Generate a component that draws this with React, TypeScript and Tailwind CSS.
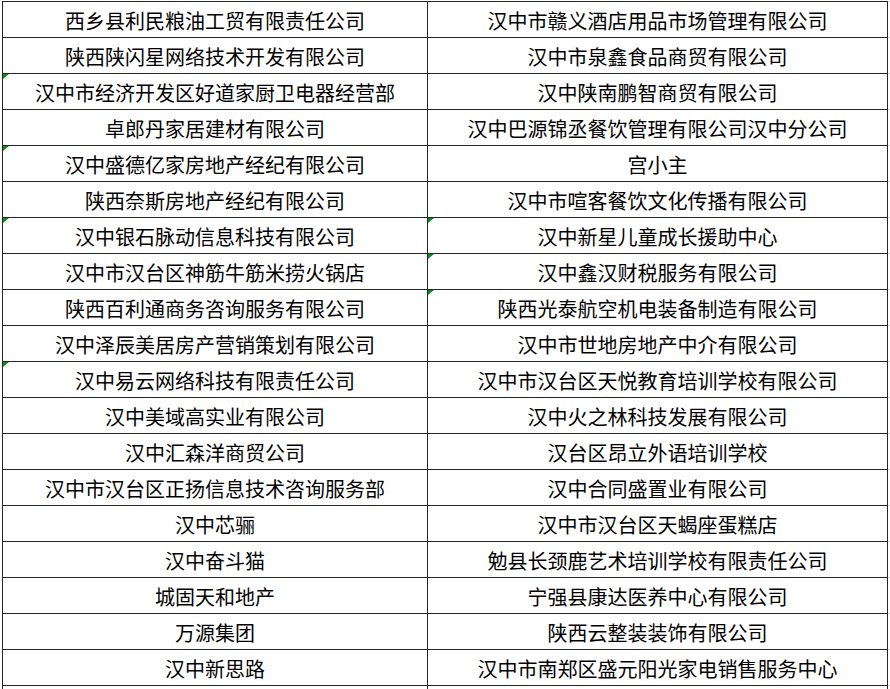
const ROWS: [string, string][] = [
  ["西乡县利民粮油工贸有限责任公司", "汉中市赣义酒店用品市场管理有限公司"],
  ["陕西陕闪星网络技术开发有限公司", "汉中市泉鑫食品商贸有限公司"],
  ["汉中市经济开发区好道家厨卫电器经营部", "汉中陕南鹏智商贸有限公司"],
  ["卓郎丹家居建材有限公司", "汉中巴源锦丞餐饮管理有限公司汉中分公司"],
  ["汉中盛德亿家房地产经纪有限公司", "宫小主"],
  ["陕西奈斯房地产经纪有限公司", "汉中市喧客餐饮文化传播有限公司"],
  ["汉中银石脉动信息科技有限公司", "汉中新星儿童成长援助中心"],
  ["汉中市汉台区神筋牛筋米捞火锅店", "汉中鑫汉财税服务有限公司"],
  ["陕西百利通商务咨询服务有限公司", "陕西光泰航空机电装备制造有限公司"],
  ["汉中泽辰美居房产营销策划有限公司", "汉中市世地房地产中介有限公司"],
  ["汉中易云网络科技有限责任公司", "汉中市汉台区天悦教育培训学校有限公司"],
  ["汉中美域高实业有限公司", "汉中火之林科技发展有限公司"],
  ["汉中汇森洋商贸公司", "汉台区昂立外语培训学校"],
  ["汉中市汉台区正扬信息技术咨询服务部", "汉中合同盛置业有限公司"],
  ["汉中芯骊", "汉中市汉台区天蝎座蛋糕店"],
  ["汉中奋斗猫", "勉县长颈鹿艺术培训学校有限责任公司"],
  ["城固天和地产", "宁强县康达医养中心有限公司"],
  ["万源集团", "陕西云整装装饰有限公司"],
  ["汉中新思路", "汉中市南郑区盛元阳光家电销售服务中心"],
  ["", ""],
];

// rows (0-based) whose cell shows the green "number stored as text" marker
const MARK_LEFT = [2, 4, 6, 10];
const MARK_RIGHT = [6, 7, 8];

function Marker() {
  return (
    <svg className="absolute left-0 top-0" width="6" height="5" viewBox="0 0 6 5">
      <polygon points="0,0 6,0 0,5" fill="#108a1c" />
    </svg>
  );
}

function Cell({ text, width, mark }: { text: string; width: string; mark: boolean }) {
  return (
    <div className={`relative flex items-center justify-center border-r border-[#262626] ${width}`}>
      {mark && <Marker />}
      <span className="pt-[2px] whitespace-nowrap">{text}</span>
    </div>
  );
}

export default function App() {
  return (
    <div
      className="h-[689px] w-[890px] overflow-hidden bg-white text-[20px] leading-none text-black"
      style={{ fontFamily: '"Noto Sans CJK SC", "Noto Sans", sans-serif' }}
    >
      <div className="ml-[2px] mt-[1px] flex">
        <div className="w-[886px] border-l border-t border-[#262626]">
          {ROWS.map(([left, right], i) => (
            <div key={i} className="flex h-[36px] border-b border-[#262626]">
              <Cell text={left} width="w-[425px]" mark={MARK_LEFT.includes(i)} />
              <Cell text={right} width="w-[460px]" mark={MARK_RIGHT.includes(i)} />
            </div>
          ))}
        </div>
        <div className="w-[2px] border-t border-[#d4d4d4]">
          {ROWS.map((_, i) => (
            <div key={i} className="h-[36px] border-b border-[#d4d4d4]" />
          ))}
        </div>
      </div>
    </div>
  );
}
